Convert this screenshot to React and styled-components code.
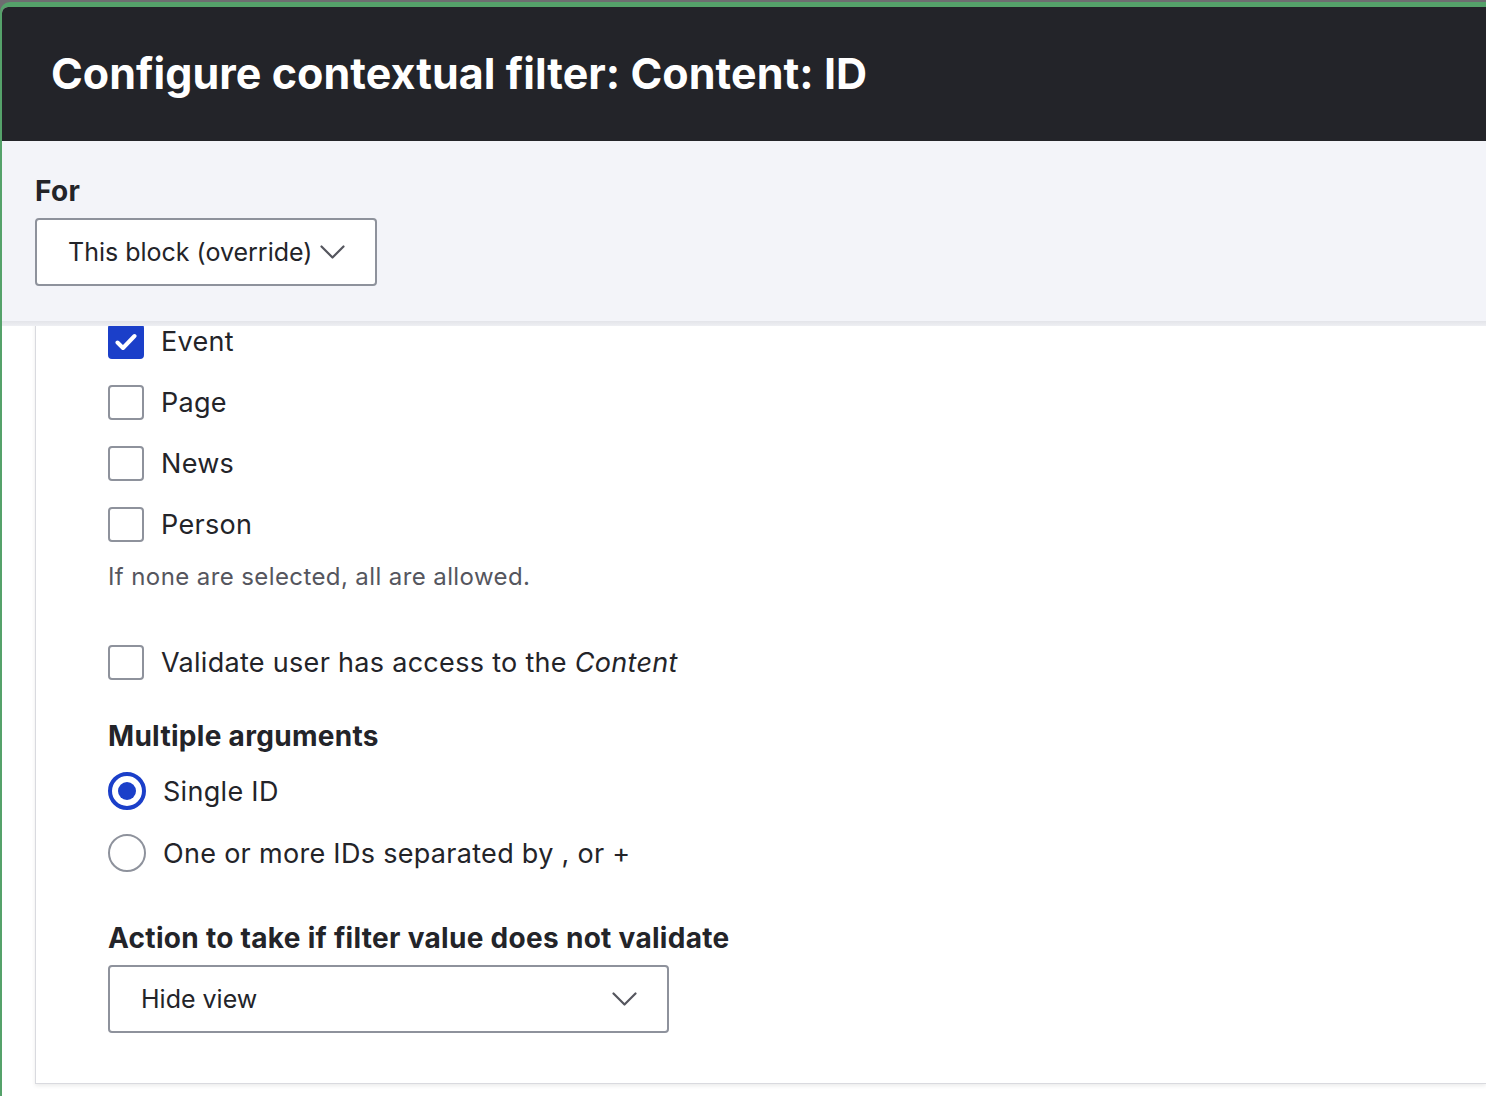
import React from "react";
import styled, { createGlobalStyle } from "styled-components";

const GlobalStyle = createGlobalStyle`
  html, body { margin: 0; padding: 0; }
  body {
    font-family: Inter, "Noto Sans", "Liberation Sans", sans-serif;
    color: #232429;
    overflow: hidden;
    -webkit-font-smoothing: antialiased;
  }
  * { box-sizing: border-box; }
`;

const Page = styled.div`
  height: 1096px;
  display: flex;
  flex-direction: column;
  background: #6d6d70;
  padding-top: 2px;
`;

const Frame = styled.div`
  flex: 1;
  display: flex;
  flex-direction: column;
  background: #55a26a;
  padding: 5px 0 0 2px;
  border-top-left-radius: 10px;
  min-height: 0;
`;

const Dialog = styled.div`
  flex: 1;
  display: flex;
  flex-direction: column;
  background: #ffffff;
  border-top-left-radius: 6px;
  overflow: hidden;
  min-height: 0;
`;

const Header = styled.header`
  height: 134px;
  flex: none;
  display: flex;
  align-items: center;
  background: #232429;
  padding: 0 0 0 49px;
`;

const Title = styled.h1`
  margin: 0;
  color: #ffffff;
  font-size: 43px;
  font-weight: 700;
  letter-spacing: 0.05px;
  line-height: 1.2;
  white-space: nowrap;
`;

const Sticky = styled.section`
  flex: none;
  background: #f3f4f9;
  padding: 32px 0 35px 33px;
  display: flex;
  flex-direction: column;
  align-items: flex-start;
  gap: 9px;
`;

const Label = styled.div`
  font-size: 28px;
  font-weight: 700;
  letter-spacing: 0.3px;
  line-height: 36px;
  color: #232429;
  white-space: nowrap;
`;

const Select = styled.div`
  display: flex;
  align-items: center;
  justify-content: space-between;
  gap: 8px;
  width: ${(p) => (p.$width ? `${p.$width}px` : "auto")};
  height: 68px;
  padding: 0 ${(p) => p.$padRight}px 0 31px;
  background: #ffffff;
  border: 2px solid #8e929c;
  border-radius: 4px;
  font-size: 25px;
  letter-spacing: 0;
  color: #232429;
  white-space: nowrap;
`;

const Scroller = styled.div`
  flex: 1;
  position: relative;
  overflow: hidden;
  min-height: 0;
`;

const TopShadow = styled.div`
  position: absolute;
  left: 0;
  right: 0;
  top: 0;
  height: 5px;
  background: linear-gradient(#e3e4e9, #eeeff3);
  z-index: 2;
`;

const Card = styled.div`
  margin-left: 33px;
  background: #ffffff;
  border-left: 1px solid #d9dadf;
  border-bottom: 1px solid #d9dadf;
  box-shadow: 0 2px 4px rgba(0, 0, 0, 0.08);
  padding: 3px 0 50px 72px;
`;

const CheckList = styled.div`
  display: flex;
  flex-direction: column;
  gap: 26px;
`;

const Row = styled.label`
  display: flex;
  align-items: center;
  gap: ${(p) => p.$gap || 17}px;
  font-size: 27px;
  letter-spacing: 0.3px;
  line-height: 35px;
  color: #232429;
  white-space: nowrap;
  margin-top: ${(p) => p.$mt || 0}px;
`;

const Box = styled.span`
  width: 36px;
  height: 35px;
  flex: none;
  display: flex;
  align-items: center;
  justify-content: center;
  border-radius: 4px;
  border: 2px solid ${(p) => (p.$checked ? "#1b3fc9" : "#8e929c")};
  background: ${(p) => (p.$checked ? "#1b3fc9" : "#ffffff")};
`;

const Radio = styled.span`
  width: 38px;
  height: 38px;
  flex: none;
  border-radius: 50%;
  display: flex;
  align-items: center;
  justify-content: center;
  border: ${(p) => (p.$checked ? "4px solid #1b3fc9" : "2px solid #8e929c")};
  background: #ffffff;
  &::after {
    content: "";
    display: ${(p) => (p.$checked ? "block" : "none")};
    width: 18px;
    height: 18px;
    border-radius: 50%;
    background: #1b3fc9;
  }
`;

const Description = styled.div`
  margin-top: 17px;
  font-size: 24px;
  letter-spacing: 0.4px;
  line-height: 36px;
  color: #55565e;
`;

const SectionLabel = styled(Label)`
  margin-top: ${(p) => p.$mt}px;
`;

const RadioList = styled.div`
  display: flex;
  flex-direction: column;
  gap: 24px;
  margin-top: 18px;
`;

const SelectWrap = styled.div`
  margin-top: 9px;
`;

const Chevron = () => (
  <svg width="25" height="14" viewBox="0 0 25 14" fill="none">
    <path d="M1.5 1.5 L12.5 12.5 L23.5 1.5" stroke="#55565e" strokeWidth="2.2" strokeLinecap="round" strokeLinejoin="round" />
  </svg>
);

const Check = () => (
  <svg width="22" height="18" viewBox="0 0 22 18" fill="none">
    <path d="M2.5 9.5 L8 15 L19.5 3" stroke="#ffffff" strokeWidth="4" strokeLinecap="round" strokeLinejoin="round" />
  </svg>
);

const types = [
  { name: "Event", checked: true },
  { name: "Page" },
  { name: "News" },
  { name: "Person" },
];

export default function App() {
  return (
    <>
      <GlobalStyle />
      <Page>
        <Frame>
          <Dialog>
            <Header>
              <Title>Configure contextual filter: Content: ID</Title>
            </Header>
            <Sticky>
              <Label>For</Label>
              <Select $padRight={30}>
                <span>This block (override)</span>
                <Chevron />
              </Select>
            </Sticky>
            <Scroller>
              <TopShadow />
              <Card>
                <CheckList>
                  {types.map((t) => (
                    <Row key={t.name}>
                      <Box $checked={t.checked}>{t.checked && <Check />}</Box>
                      {t.name}
                    </Row>
                  ))}
                </CheckList>
                <Description>If none are selected, all are allowed.</Description>
                <Row $mt={50}>
                  <Box />
                  <span>
                    Validate user has access to the <em>Content</em>
                  </span>
                </Row>
                <SectionLabel $mt={38}>Multiple arguments</SectionLabel>
                <RadioList>
                  <Row $gap={17}>
                    <Radio $checked />
                    Single ID
                  </Row>
                  <Row $gap={17}>
                    <Radio />
                    One or more IDs separated by , or +
                  </Row>
                </RadioList>
                <SectionLabel $mt={48}>Action to take if filter value does not validate</SectionLabel>
                <SelectWrap>
                  <Select $width={561} $padRight={30}>
                    <span>Hide view</span>
                    <Chevron />
                  </Select>
                </SelectWrap>
              </Card>
            </Scroller>
          </Dialog>
        </Frame>
      </Page>
    </>
  );
}
